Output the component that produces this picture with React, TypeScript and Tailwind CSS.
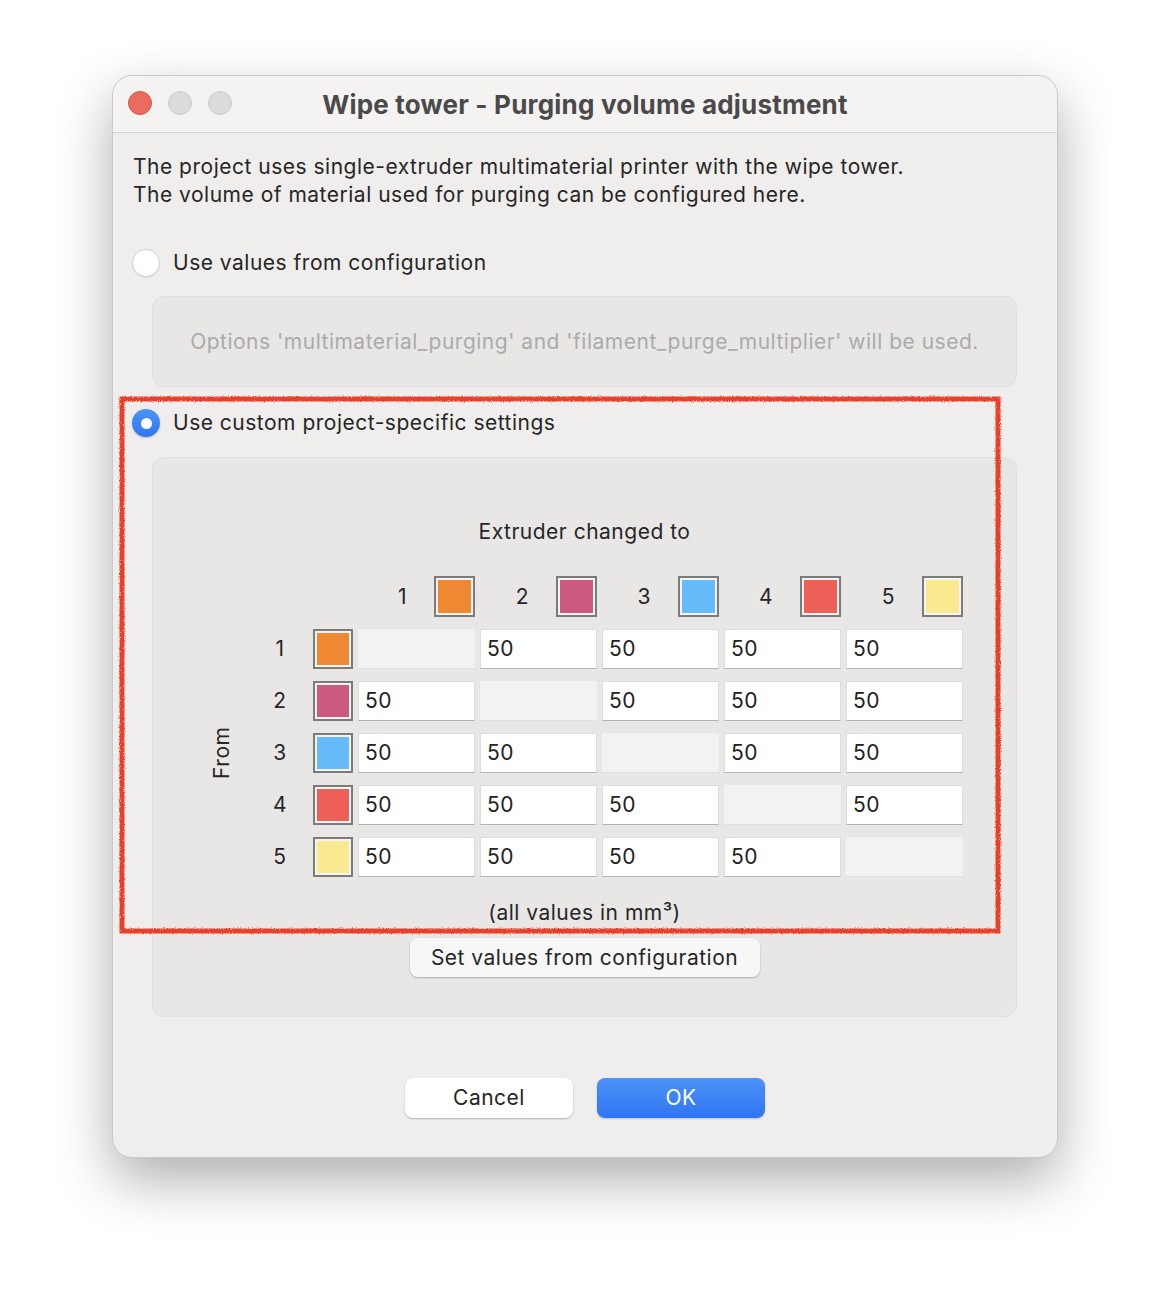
import React from 'react'

const colors = ['#ee8833', '#cc5a80', '#66bbfb', '#ee5f58', '#f9ea8f']

const font = { fontFamily: 'Inter, "Noto Sans", sans-serif' }

function Swatch({ color, size }: { color: string; size: 'head' | 'row' }) {
  return (
    <div
      className={`${size === 'head' ? 'w-[41px] h-[41px]' : 'w-[40px] h-[40px]'} shrink-0 border-[2px] border-[#7b7b7b] p-[2px] bg-[#f4f4f4]`}
    >
      <div className="w-full h-full" style={{ backgroundColor: color }} />
    </div>
  )
}

function Cell({ value }: { value?: string }) {
  if (!value) {
    return <div className="w-[117px] h-[40px] bg-[#f2f2f1] border-b border-[#e0dfdd]" />
  }
  return (
    <div className="w-[117px] h-[40px] bg-white border border-[#dcdcdc] border-b-[#b3b3b3] flex items-center px-[6px] text-[21px] text-[#222]">
      {value}
    </div>
  )
}

function Radio({ checked }: { checked?: boolean }) {
  if (checked) {
    return (
      <div className="w-[28px] h-[28px] rounded-full bg-gradient-to-b from-[#4b94f8] to-[#2f76f0] flex items-center justify-center shadow-[0_1px_2px_rgba(0,0,0,0.2)]">
        <div className="w-[11px] h-[11px] rounded-full bg-white" />
      </div>
    )
  }
  return <div className="w-[28px] h-[28px] rounded-full bg-white border border-[#d2d2d2] shadow-[0_1px_1px_rgba(0,0,0,0.08)]" />
}

export default function App() {
  return (
    <div className="w-[1170px] h-[1306px] bg-white pt-[75px] pl-[112px] tracking-[0.5px]" style={font}>
      <div className="relative w-[946px] h-[1083px] rounded-[20px] bg-[#efeeec] border border-[#c9c9c9] shadow-[0_22px_55px_rgba(0,0,0,0.32)] flex flex-col">
        {/* title bar */}
        <div className="relative h-[57px] shrink-0 rounded-t-[20px] bg-[#f4f3f2] border-b border-[#d4d3d1] flex items-center justify-center">
          <div className="absolute left-[15px] top-[15px] flex gap-[16px]">
            <div className="w-[24px] h-[24px] rounded-full bg-[#ec6b5f] border border-[#d65548]" />
            <div className="w-[24px] h-[24px] rounded-full bg-[#dcdcdb] border border-[#cbcbca]" />
            <div className="w-[24px] h-[24px] rounded-full bg-[#dcdcdb] border border-[#cbcbca]" />
          </div>
          <div className="text-[26px] font-bold text-[#4a4a4a] tracking-[0.2px]">Wipe tower - Purging volume adjustment</div>
        </div>

        {/* body */}
        <div className="flex flex-col pl-[19px] pr-[40px] pt-[20px]">
          <div className="pl-[1px] text-[21px] leading-[28px] text-[#262626]">
            <div>The project uses single-extruder multimaterial printer with the wipe tower.</div>
            <div>The volume of material used for purging can be configured here.</div>
          </div>

          <div className="mt-[40px] h-[28px] flex items-center gap-[13px]">
            <Radio />
            <span className="text-[21px] text-[#262626]">Use values from configuration</span>
          </div>

          <div className="mt-[19px] ml-[20px] h-[91px] rounded-[12px] bg-[#e8e7e5] border border-[#e0dfdd] flex items-center justify-center text-[21px] text-[#ababab]">
            Options 'multimaterial_purging' and 'filament_purge_multiplier' will be used.
          </div>

          <div className="mt-[22px] h-[28px] flex items-center gap-[13px]">
            <Radio checked />
            <span className="text-[21px] text-[#262626]">Use custom project-specific settings</span>
          </div>

          <div className="mt-[20px] ml-[20px] h-[560px] rounded-[12px] bg-[#e8e7e5] border border-[#e0dfdd] flex flex-col items-center pt-[60px]">
            <div className="h-[28px] leading-[28px] text-[21px] text-[#262626]">Extruder changed to</div>

            <div className="self-start mt-[30px] flex text-[21px] text-[#262626]">
              <div className="w-[28px] ml-[55px] flex items-center justify-center self-end h-[248px]">
                <span className="-rotate-90 whitespace-nowrap">From</span>
              </div>
              <div className="ml-[24px] flex flex-col">
                <div className="pl-[98px] flex gap-[5px] h-[41px]">
                  {colors.map((c, i) => (
                    <div key={i} className="w-[117px] flex items-center justify-end gap-[27px]">
                      <span>{i + 1}</span>
                      <Swatch color={c} size="head" />
                    </div>
                  ))}
                </div>
                <div className="mt-[12px] flex flex-col gap-[12px]">
                  {colors.map((c, r) => (
                    <div key={r} className="flex items-center h-[40px]">
                      <span className="w-[40px] text-center">{r + 1}</span>
                      <div className="ml-[13px]">
                        <Swatch color={c} size="row" />
                      </div>
                      <div className="ml-[5px] flex gap-[5px]">
                        {colors.map((_, col) => (
                          <Cell key={col} value={col === r ? undefined : '50'} />
                        ))}
                      </div>
                    </div>
                  ))}
                </div>
              </div>
            </div>

            <div className="mt-[22px] h-[28px] leading-[28px] text-[21px] text-[#262626]">(all values in mm³)</div>

            <button className="mt-[11px] h-[39px] w-[350px] rounded-[8px] bg-[#f7f7f7] shadow-[0_1px_2px_rgba(0,0,0,0.25)] text-[21px] text-[#262626]">
              Set values from configuration
            </button>
          </div>
        </div>

        <div className="mt-[61px] flex justify-center gap-[24px]">
          <button className="w-[168px] h-[40px] rounded-[8px] bg-white shadow-[0_1px_2px_rgba(0,0,0,0.25)] text-[21px] text-[#262626]">
            Cancel
          </button>
          <button className="w-[168px] h-[40px] rounded-[8px] bg-gradient-to-b from-[#4c92f6] to-[#2f75f3] text-[21px] text-white shadow-[0_1px_2px_rgba(0,0,0,0.2)]">
            OK
          </button>
        </div>

        {/* annotation overlay */}
        <svg className="absolute left-[4px] top-[318px] pointer-events-none" width="886" height="542" viewBox="0 0 886 542">
          <defs>
            <filter id="rough">
              <feTurbulence type="fractalNoise" baseFrequency="0.9" numOctaves="2" result="n" />
              <feDisplacementMap in="SourceGraphic" in2="n" scale="3" />
            </filter>
          </defs>
          <rect x="5" y="5" width="876" height="532" fill="none" stroke="#e8412a" strokeWidth="5" filter="url(#rough)" />
        </svg>
      </div>
    </div>
  )
}
